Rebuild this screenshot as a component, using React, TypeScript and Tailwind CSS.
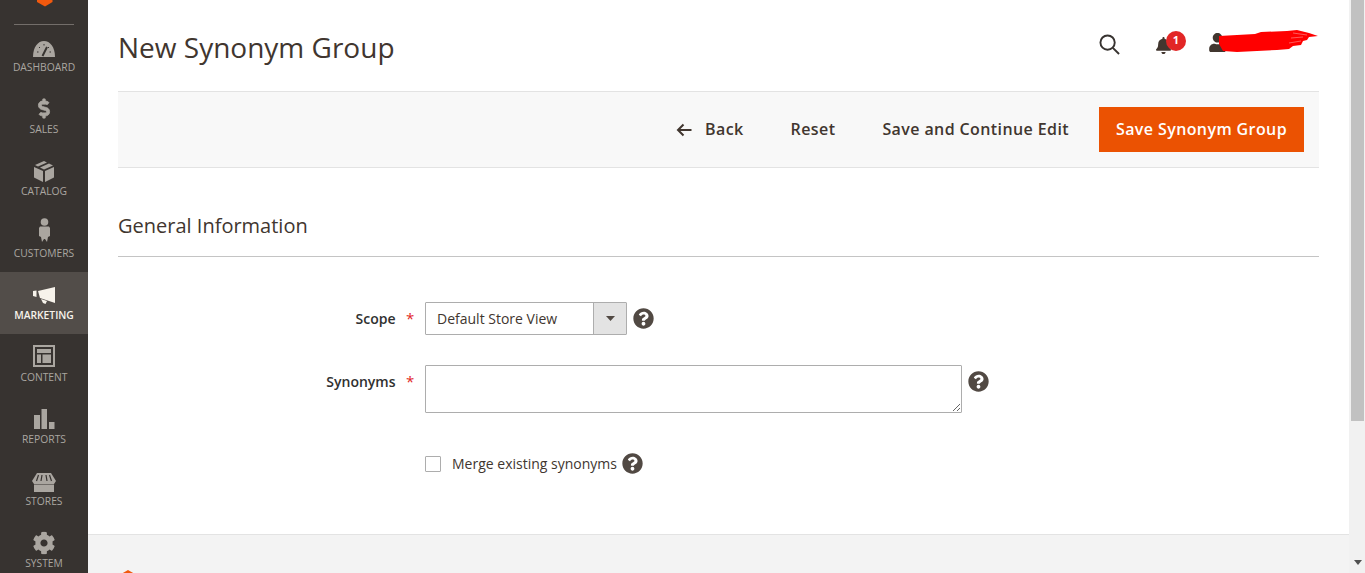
import type { ReactNode } from 'react';
import { FaBell, FaCog, FaDollarSign, FaQuestionCircle, FaUser } from 'react-icons/fa';

const fill = 'currentColor';

const navItems: { label: string; active?: boolean; icon: ReactNode }[] = [
  {
    label: 'DASHBOARD',
    icon: (
      <>
        <path d="M5 22C5 12 10 6 16 6s11 6 11 16z" fill={fill} />
        <path d="M14.500 21l4.500-9" stroke="#373330" strokeWidth="2" />
        <path d="M9 17h1.500M11 12l1 1M16 9v1.500M21 12l-1 1M23 17h-1.500" stroke="#373330" strokeWidth="1" />
      </>
    ),
  },
  { label: 'SALES', icon: <FaDollarSign x="6" y="1.500" size={20} fill={fill} stroke={fill} strokeWidth={20} /> },
  {
    label: 'CATALOG',
    icon: (
      <>
        <path d="M6 8l9 4v11l-8-4a1 1 0 0 1-1-1z" fill={fill} />
        <path d="M26 8l-9 4v11l8-4a1 1 0 0 0 1-1z" fill={fill} />
        <path d="M7 6l9-4 3 1.500-9 4zM12 8.500l9-4 4 2-9 4z" fill={fill} />
      </>
    ),
  },
  {
    label: 'CUSTOMERS',
    icon: (
      <>
        <circle cx="16.500" cy="1" r="3.800" fill={fill} />
        <path d="M12 5.500h9l1 1.500v8l-2 1-1 5-2-3h-1l-2 3-1-5-2-1V7z" fill={fill} />
      </>
    ),
  },
  {
    label: 'MARKETING',
    active: true,
    icon: (
      <>
        <path d="M10 8L27 4v16l-15-5z" fill={fill} />
        <path d="M5 8l3.500-.5v6.500L5 13z" fill={fill} />
        <path d="M13 16l6 2-1.500 3-2.500-1z" fill={fill} />
      </>
    ),
  },
  {
    label: 'CONTENT',
    icon: (
      <>
        <path d="M5 0h22v22H5zM7 2v18h18V2z" fill={fill} fillRule="evenodd" />
        <path d="M9 4h14v4H9zM9 9.500h4V18H9zM14.500 9.500H23V18h-8.500z" fill={fill} />
      </>
    ),
  },
  {
    label: 'REPORTS',
    icon: <path d="M6 8h6v14H6zM13.500 2H19v20h-5.500zM21 15h5.500v7H21z" fill={fill} />,
  },
  {
    label: 'STORES',
    icon: (
      <>
        <path d="M9 4h14l5 8-2 3H6l-2-3z" fill={fill} />
        <path d="M10.500 6l-2 6M14 6l-1 6M18 6l1 6M21.500 6l2 6" stroke="#373330" strokeWidth="1.200" />
        <path d="M6 15.500h20V23H6z" fill={fill} />
      </>
    ),
  },
  { label: 'SYSTEM', icon: <FaCog x="4.500" y="0.500" size={23} fill={fill} /> },
];

const Sidebar = () => {
  return (
    <aside className="flex h-full w-[88px] shrink-0 flex-col bg-[#373330]">
      <div className="flex h-6 shrink-0 flex-col items-center border-b border-[#736e6a] mx-[14px] box-content -mb-px">
        <svg width="16" height="7" viewBox="0 0 16 7" className="ml-px">
          <path d="M0 0h15.500v2L8 6.500 0 2z" fill="#f1590e" />
        </svg>
      </div>
      {navItems.map((item) => (
        <div
          key={item.label}
          className={`flex h-[62px] shrink-0 flex-col items-center pt-[11px] ${
            item.active ? 'bg-[#524d49] font-semibold text-[#f7f3eb]' : 'text-[#aaa6a0]'
          }`}
        >
          <svg width="32" height="25" viewBox="0 0 32 25" className="shrink-0 overflow-visible">
            {item.icon}
          </svg>
          <span className="text-[10.300px] leading-[14px]">{item.label}</span>
        </div>
      ))}
    </aside>
  );
};

const Help = () => <FaQuestionCircle className="shrink-0 text-[#514943]" size={21} />;

const Required = ({ label }: { label: string }) => (
  <div className="flex w-[307px] shrink-0 items-center">
    <span className="w-[278px] pr-[0.500px] text-right text-[14px] font-semibold text-[#303030]">{label}</span>
    <span className="ml-[10px] text-[15px] text-[#e22626]">*</span>
  </div>
);

const TopBar = () => {
  return (
    <header className="flex h-[91px] shrink-0 items-start justify-between pt-[27px]">
      <h1 className="text-[28px] leading-[40px] text-[#41362f]">New Synonym Group</h1>
      <div className="relative mt-px flex items-center pt-[6px]">
        <svg width="21" height="21" viewBox="0 0 22 22" fill="none" stroke="#373330" strokeWidth="2" className="mr-[34px]">
          <circle cx="9" cy="9" r="7.500" />
          <path d="M14.500 14.500L21 21" />
        </svg>
        <div className="relative mr-[22px] h-[20px] w-[32px]">
          <FaBell size={17} className="mt-[2px] ml-px text-[#41362f]" />
          <span className="absolute -top-[4px] left-[12px] flex h-5 w-5 items-center justify-center rounded-full bg-[#e22626] text-[11px] font-bold text-white">
            1
          </span>
        </div>
        <div className="relative h-[20px] w-[111px]">
          <FaUser size={19} className="-mt-[2px] text-[#41362f]" />
          <svg width="104" height="24" viewBox="0 0 104 24" className="absolute -top-[5px] left-[9px]">
            <path
              d="M2 6L38 4l6-2 26-1 10-1 12 3 9 3-9 1-2 3-4 1-2 4-8 1-4 3-12 1-20 1-20 1-14-1-4-7z"
              fill="#ff0000"
            />
            <path d="M76 3l14 2M74 8l12-1M72 13l12-2" stroke="#ffffff" strokeOpacity="0.500" strokeWidth="0.700" fill="none" />
          </svg>
        </div>
      </div>
    </header>
  );
};

const ActionBar = () => {
  return (
    <div className="flex h-[77px] shrink-0 items-center justify-end border-y border-[#e3e3e3] bg-[#f8f8f8] pr-[15px] text-[16px] font-semibold tracking-[0.025em] text-[#41362f]">
      <svg width="16" height="14" viewBox="0 0 16 14" fill="none" stroke="#41362f" strokeWidth="2" className="mr-[13px]">
        <path d="M15.500 7H2M7.500 1.500L2 7l5.500 5.500" />
      </svg>
      <span className="pb-[2px]">Back</span>
      <span className="ml-[47px] pb-[2px]">Reset</span>
      <span className="ml-[47px] pb-[2px]">Save and Continue Edit</span>
      <button className="ml-[30px] flex h-[45px] w-[205px] items-center justify-center bg-[#eb5202] pb-[2px] tracking-[0.025em] text-white">
        Save Synonym Group
      </button>
    </div>
  );
};

const Form = () => {
  return (
    <section className="text-[14px] text-[#303030]">
      <h2 className="mt-[43px] h-[46px] border-b border-[#c4c4c4] text-[20px] leading-[30px] text-[#41362f]">
        General Information
      </h2>
      <div className="mt-[45px] flex h-[33px] items-center">
        <Required label="Scope" />
        <div className="flex h-full w-[202px] items-stretch rounded-[1px] border border-[#adadad] bg-white">
          <span className="flex flex-1 items-center pl-[11px] text-[#41362f]">Default Store View</span>
          <span className="flex w-[33px] items-center justify-center border-l border-[#adadad] bg-[#e3e3e3]">
            <svg width="9" height="5" viewBox="0 0 9 5">
              <path d="M0 0h9L4.500 5z" fill="#514943" />
            </svg>
          </span>
        </div>
        <span className="ml-[6px]">
          <Help />
        </span>
      </div>
      <div className="mt-[30px] flex">
        <div className="flex h-[32px] items-center">
          <Required label="Synonyms" />
        </div>
        <textarea className="h-[48px] w-[537px] resize rounded-[1px] border border-[#adadad] bg-white outline-none" />
        <span className="mt-[6px] ml-[6px]">
          <Help />
        </span>
      </div>
      <div className="mt-[40px] flex h-[21px] items-center pl-[307px]">
        <span className="h-4 w-4 rounded-[1px] border border-[#adadad] bg-white" />
        <span className="ml-[11px] text-[#41362f]">Merge existing synonyms</span>
        <span className="ml-[5px]">
          <Help />
        </span>
      </div>
    </section>
  );
};

const Scrollbar = () => {
  return (
    <div className="flex h-full w-4 shrink-0 flex-col items-end bg-[#f1f1f1] pr-px">
      <div className="h-[421px] w-[13px] bg-[#c1c1c1]" />
      <svg width="8" height="5" viewBox="0 0 8 5" className="mt-[139px] mr-[2.500px]">
        <path d="M0 0h8L4 5z" fill="#505050" />
      </svg>
    </div>
  );
};

const App = () => {
  return (
    <div className="flex h-[573px] w-full overflow-hidden bg-white font-['Open_Sans',sans-serif]">
      <Sidebar />
      <main className="flex min-w-0 flex-1 flex-col">
        <div className="flex h-[534px] shrink-0 flex-col px-[30px]">
          <TopBar />
          <ActionBar />
          <Form />
        </div>
        <footer className="flex-1 border-t border-[#e3e3e3] bg-[#f3f3f3] pt-[35px] pl-[34px]">
          <svg width="12" height="6" viewBox="0 0 12 6">
            <path d="M6 0l6 3.500V6H0V3.500z" fill="#f1590e" />
          </svg>
        </footer>
      </main>
      <Scrollbar />
    </div>
  );
};

export default App;
